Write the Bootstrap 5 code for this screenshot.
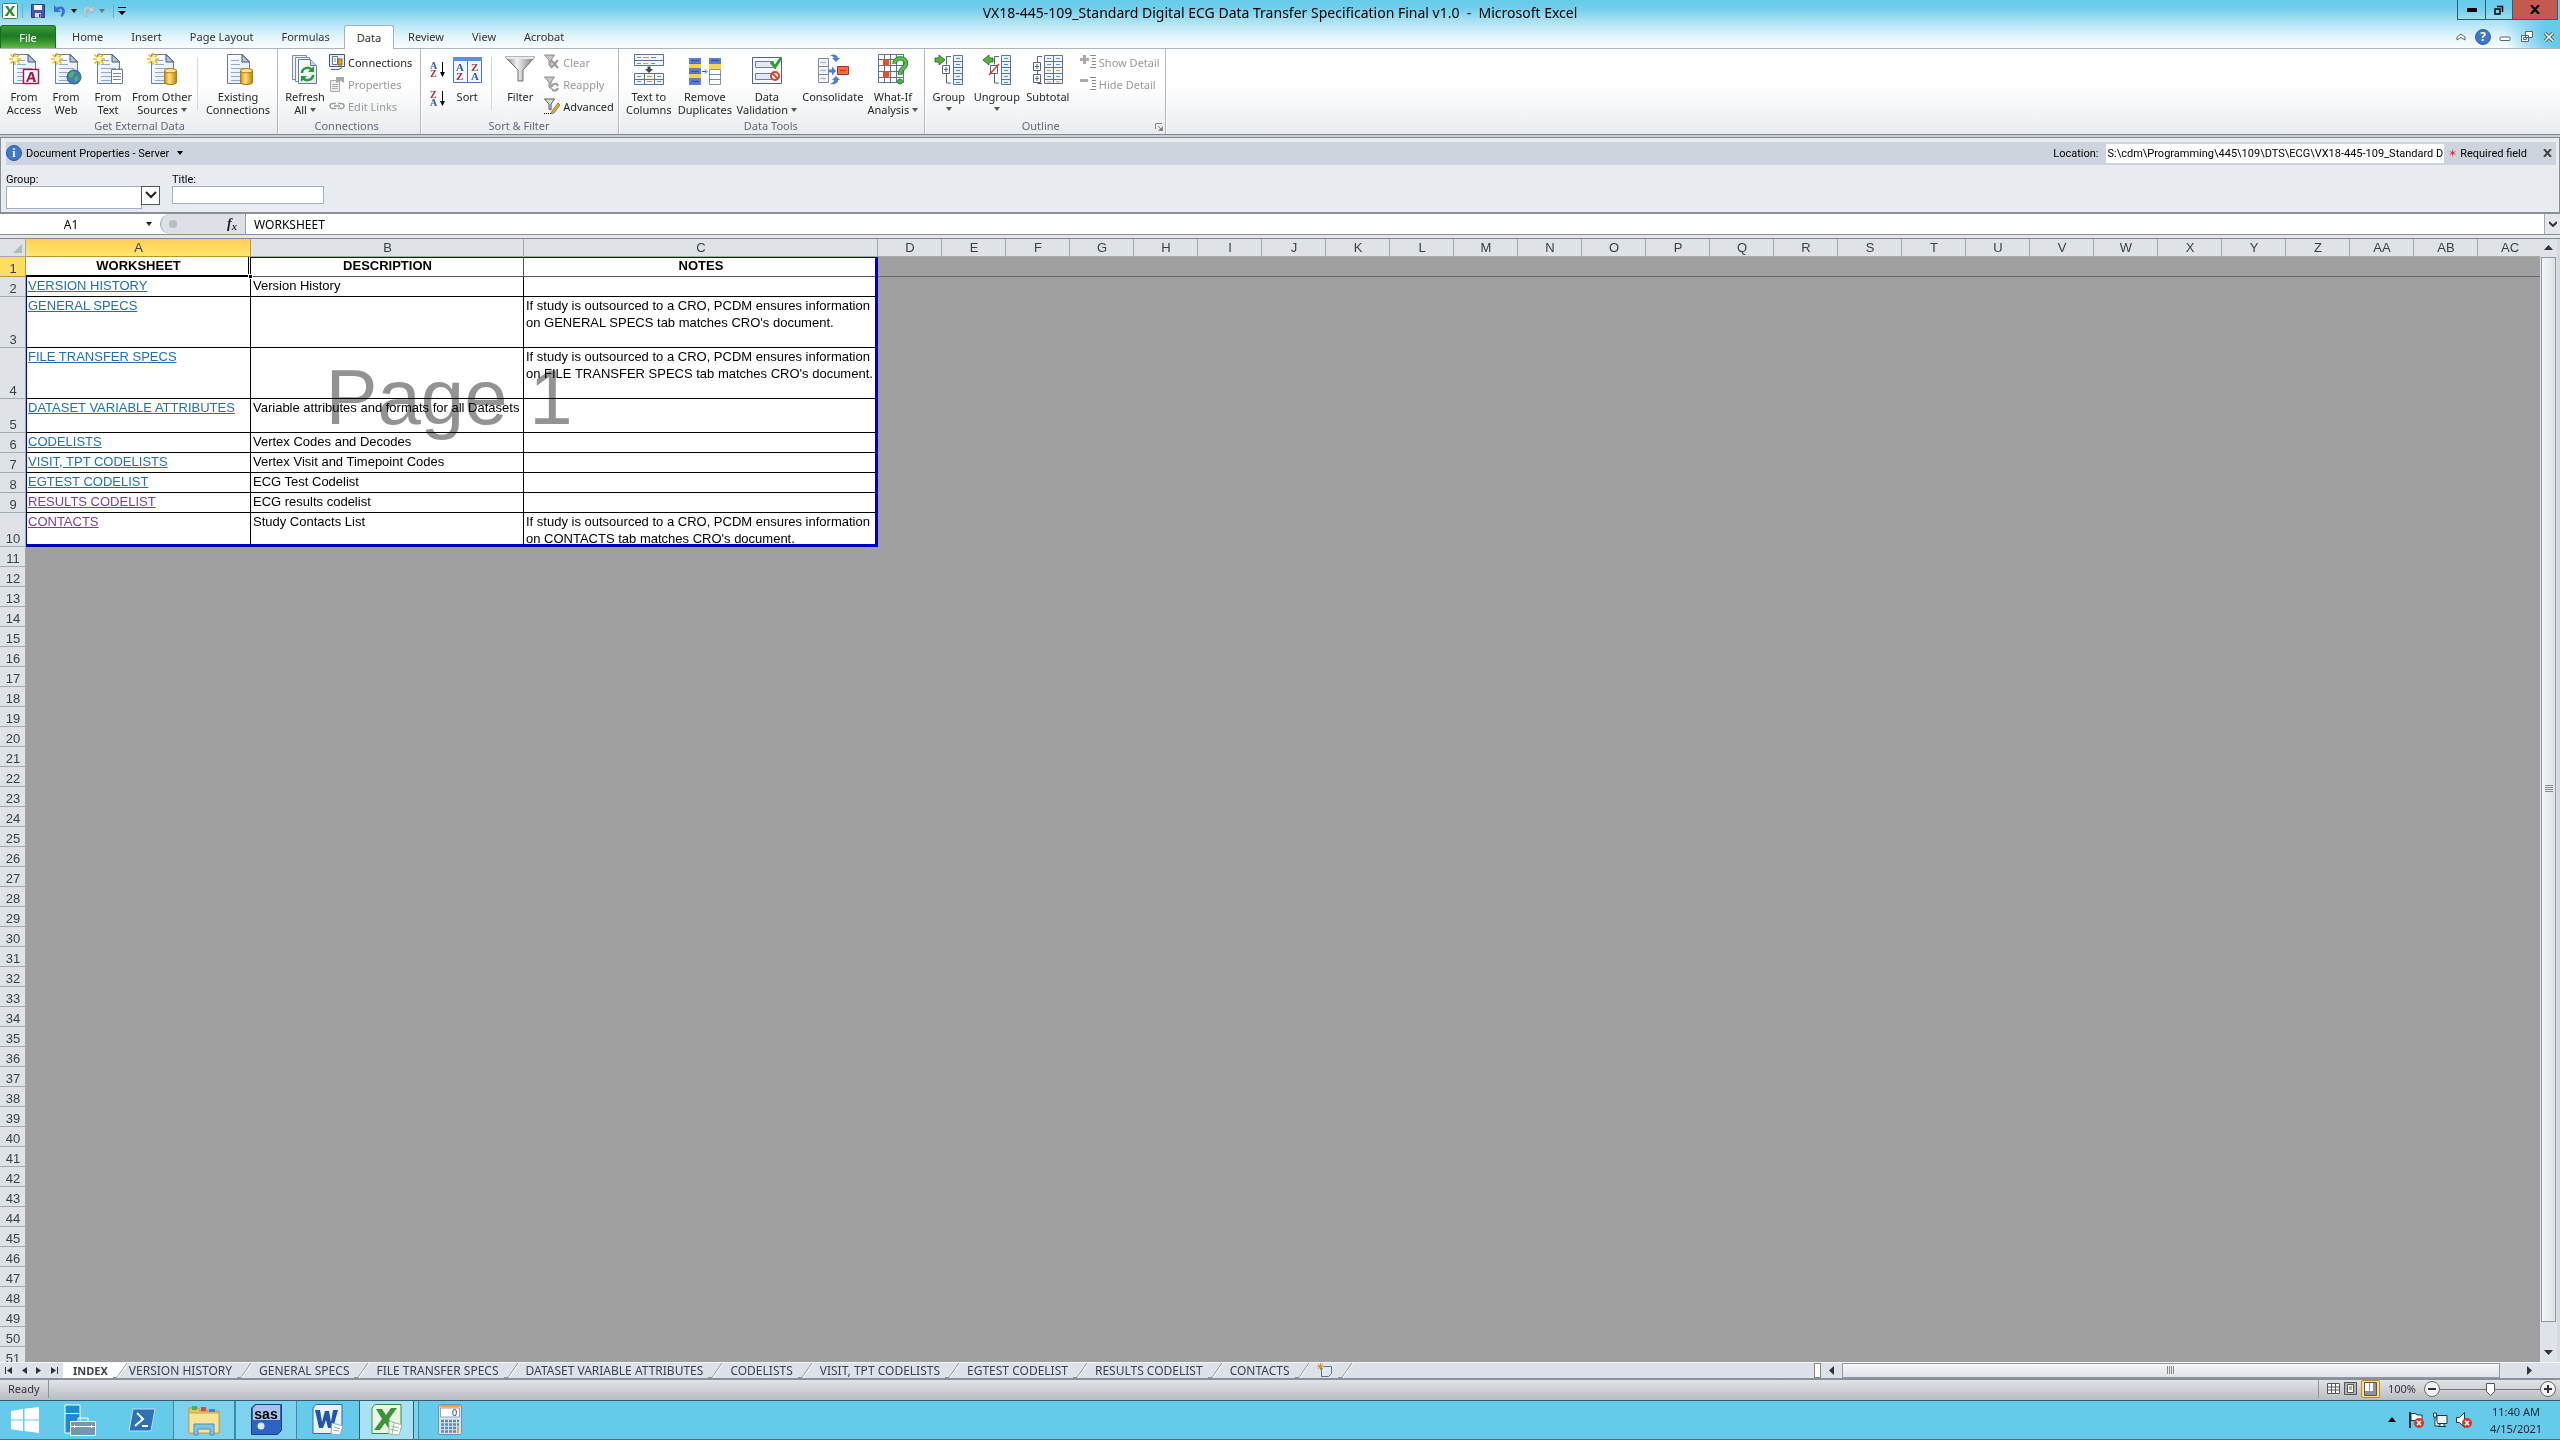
<!DOCTYPE html>
<html lang="en">
<head>
<meta charset="utf-8">
<meta name="viewport" content="width=device-width, initial-scale=1">
<title>VX18-445-109_Standard Digital ECG Data Transfer Specification Final v1.0 - Microsoft Excel</title>
<link rel="stylesheet" href="https://cdn.jsdelivr.net/npm/bootstrap@5.3.0/dist/css/bootstrap.min.css">
<style>
:root{--ui:"Noto Sans","Open Sans",sans-serif;--cell:"Liberation Sans",Arial,sans-serif;}
html,body{height:100%;}
body{font-family:var(--ui);font-size:11px;line-height:13px;color:#1e1e1e;background:#a0a0a0;overflow:hidden;}
button{font:inherit;color:inherit;background:none;border:0;padding:0;}
input,select{font:inherit;color:#000;}
svg{display:block;flex:none;}
.tri{width:0;height:0;border:3px solid transparent;border-top:4px solid currentColor;border-bottom:0;display:inline-block;}
.vsep{width:1px;background:#7fa9bb;}

/* title bar and tabs */
.topzone{background:radial-gradient(ellipse 56px 60px at 100% 60%,#66cbeb 30%,rgba(102,203,235,0) 100%),linear-gradient(#66cbeb 0,#6fceec 16%,#b5e5f5 50%,#e2f5fb 76%,#fafdfe 100%);border-bottom:1px solid #a9b4bc;}
.titlebar{height:25px;}
.wintitle{font-size:14px;line-height:25px;color:#000;}
.qat{flex:1 1 0;padding:2px 0 0 2px;height:20px;}
.winctl{flex:1 1 0;padding-right:2px;}
.winbtn{height:20px;border:1px solid #2d5f71;border-top:0;margin-left:-1px;display:flex;align-items:center;justify-content:center;}
.w-min{width:29px}.w-max{width:28px}.w-close{width:46px;background:#c6594f;}
.tabrow{height:23px;}
.tabrow .rtab{padding:0 14px;line-height:23px;color:#333;}
.filetab{width:56px;margin-right:2px;background:linear-gradient(#3c9a3c,#1f7a22 45%,#2f8f2a 65%,#62b846);color:#fff!important;border:1px solid #1b6b23;border-bottom:0;border-radius:3px 3px 0 0;line-height:23px;}
.rtab.on{background:#fff;border:1px solid #9fb4be;border-bottom:0;border-radius:3px 3px 0 0;padding:0 12px!important;margin-bottom:-1px;z-index:1;line-height:22px;}
.wbctl button{width:22px;display:flex;justify-content:center;}

/* ribbon */
.ribbon{height:86px;background:linear-gradient(#fff 0,#fefefe 45%,#e9ecef 100%);border-bottom:1px solid #85898f;color:#262626;}
.rgroup{border-right:1px solid #b3b8be;box-shadow:1px 0 0 #fff;padding:2px 1px 0 3px;}
.rgroup .glabel{color:#63687c;text-align:center;line-height:15px;height:17px;}
.big{display:flex;flex-direction:column;align-items:center;height:67px;padding-top:2px;text-align:center;white-space:nowrap;}
.big .cap{padding-top:5px;line-height:13px;}
.big .tri{margin:0 0 2px 3px;color:#555;}
.mini{display:flex;align-items:center;gap:3px;height:22px;white-space:nowrap;}
.off{color:#999;}
.w42{width:42px}.w58{width:58px}.w66{width:66px}.w76{width:76px}.w48{width:48px}.w54{width:54px}
.sortpair{width:27px;gap:12px;padding-top:10px;}
.rsep{width:1px;margin:6px 2px 8px;background:#d5d9dd;}

/* document properties */
.strip{height:3px;background:#c9ced5;border-bottom:1px solid #85898f;}
.docprops{height:76px;background:#e8ecf1;border-left:1px solid #8b9097;border-right:1px solid #8b9097;border-bottom:2px solid #8b8f96;padding:4px 3px 0 5px;color:#000;font-family:Roboto,var(--ui);font-size:11px;}
.dphead{height:23px;background:#cdd4dd;}
.locbox{width:338px;height:19px;border:0;padding:0 1px;background:#fff;}
.combo{width:154px;height:23px;}
.combo select{appearance:none;width:136px;height:23px;border:1px solid #9fb0c4;background:#fff;border-radius:0;padding:0;}
.combo .drop{width:19px;height:19px;border:1px solid #555;background:#fff;display:flex;align-items:center;justify-content:center;margin-left:-1px;}
.titlein{width:152px;height:18px;border:1px solid #9fb0c4;background:#fff;padding:0 2px;}

/* formula bar */
.fbar{height:21px;background:#fff;border-bottom:1px solid #8b8f96;font-size:12px;}
.namebox{width:160px;}
.namebox input{width:142px;border:0;text-align:center;height:20px;background:none;padding:2px 0 0;}
.fxzone{width:86px;background:#dde1e7;border-right:1px solid #9aa0a8;border-left:1px solid #9aa0a8;border-radius:10px 0 0 10px;}
.fxbtn{font:italic 700 14px "Liberation Serif",serif;}
.fin{border:0;padding:2px 8px 0;height:20px;background:none;}
.fdrop{width:16px;background:#e4e8ed;border-left:1px solid #a5abb3;}
.fgap{height:4px;background:#e4e7ec;border-bottom:1px solid #85898f;}

/* worksheet */
.sheetarea{min-height:0;background:#a0a0a0;}
.gridwrap{min-width:0;overflow:hidden;position:relative;}
.xl{table-layout:fixed;border-collapse:separate;border-spacing:0;width:2542px;font:13px/17px var(--cell);color:#000;}
.xl th,.xl td{padding:0;font-weight:400;vertical-align:top;}
.xl thead th{height:18px;background:#dfe3e8;text-align:center;line-height:18px;color:#3a3f46;box-shadow:inset -1px -1px 0 #a4a9b0;}
.xl thead th.hot{background:linear-gradient(#ffcf58,#ffe86e);box-shadow:inset -1px -1px 0 #c2942d;}
.xl tbody th{background:#dfe3e8;text-align:center;vertical-align:bottom;color:#3a3f46;box-shadow:inset -1px -1px 0 #a4a9b0;}
.xl tbody th.hot{background:#ffdc62;box-shadow:inset -1px -1px 0 #c2942d;}
.xl .cellx{background:#fff;box-shadow:inset -1px -1px 0 #000;padding-left:2px;white-space:nowrap;}
.xl .colA{box-shadow:inset 1px 0 0 #0000c0,inset -1px -1px 0 #000;}
.xl .colC{box-shadow:inset -3px 0 0 #0000b8,inset 0 -1px 0 #000;}
.xl .hd .cellx{font-weight:700;text-align:center;padding-left:0;box-shadow:inset 0 1px 0 #0000a0,inset -1px -1px 0 #555;}
.xl .hd .colC{box-shadow:inset -3px 0 0 #0000b8,inset 0 1px 0 #0000a0,inset 0 -1px 0 #555;}
.xl .hd .colA{box-shadow:inset -1px -2px 0 #000,inset -2px 0 0 #fff,inset -3px 0 0 #000;position:relative;}
.xl .last .cellx{box-shadow:inset 0 -3px 0 #0000b8,inset -1px 0 0 #000;}
.xl .last .colA{box-shadow:inset 0 -3px 0 #0000b8,inset -1px 0 0 #000,inset 1px 0 0 #0000c0;}
.xl .last .colC{box-shadow:inset -3px -3px 0 #0000b8;}
.xl .frz{box-shadow:inset 0 -1px 0 #6a6a6a;}
.xl a{color:#1f6fb5;}
.xl a.seen{color:#7a3c96;}
.handle{position:absolute;right:-2px;bottom:-2px;width:5px;height:5px;background:#000;border:1px solid #fff;z-index:2;}
.h20{height:20px}.h34{height:34px}.h51{height:51px}
.watermark{position:absolute;left:26px;top:18px;width:846px;height:280px;font:78px/90px var(--cell);color:#939393;mix-blend-mode:multiply;pointer-events:none;}
.vscroll{width:20px;background:#dfe3e9;border-right:3px solid #d5dae0;}
.vscroll .arrow{height:18px;display:flex;align-items:center;justify-content:center;}
.vthumb{flex:1;border:1px solid #9399a2;background:linear-gradient(90deg,#f4f6f8,#dde1e7);margin:0 1px;}
.vrest{height:22px;}

/* sheet tabs */
.tabsbar{height:16px;background:#dde1e9;border-top:1px solid #f4f5f7;font-size:12px;line-height:15px;color:#3d434b;}
.navs{width:58px;padding-left:5px;}
.stab{padding:0 1px;white-space:nowrap;}
.stab.cur{background:#fff;font-weight:700;padding:0 1px 0 10px;font-size:11px;margin-left:5px;}
.hscroll{width:726px;}
.hsplit{width:7px;border:1px solid #888;background:#fff;}
.hthumb{width:658px;border:1px solid #9399a2;background:linear-gradient(#f6f7f9,#dfe2e8);}
.statusbar{height:22px;background:linear-gradient(#e0e3e7,#b9bdc3);border-top:2px solid #8b8f96;color:#333;padding-bottom:2px;}
.statusbar .vsep{background:#8f949b;}
.viewon{background:#fbe08a;border:1px solid #c28a1e;border-radius:2px;padding:1px 2px;}

/* taskbar */
.taskbar{height:40px;background:#66caeb;border-top:1px solid #2c5f70;border-bottom:1px solid #3d7488;color:#0d2a35;}
.tk{height:38px;display:flex;align-items:center;justify-content:center;width:62px;}
.tk.first{width:49px;}
.tk.run{background:#7dd3ef;border-left:1px solid #3f8aa2;border-right:1px solid #3f8aa2;}
.tk.act{background:#a9e2f5;border-left:1px solid #2c5f70;border-right:1px solid #2c5f70;width:55px;}
.tk.stackedge{width:5px;border-left:0;}
.clock{line-height:17px;text-align:center;width:72px;}
</style>
</head>
<body class="d-flex flex-column">

<svg width="0" height="0" class="position-absolute" aria-hidden="true">
<defs>
<linearGradient id="gy" x1="0" x2="1"><stop offset="0" stop-color="#d79414"/><stop offset=".4" stop-color="#ffe27a"/><stop offset="1" stop-color="#c98408"/></linearGradient>
<linearGradient id="gd" x1="0" y1="0" x2="1" y2="1"><stop offset="0" stop-color="#fff"/><stop offset="1" stop-color="#dde8f6"/></linearGradient>
<linearGradient id="gg" x1="0" x2="1"><stop offset="0" stop-color="#777"/><stop offset=".4" stop-color="#f2f2f2"/><stop offset="1" stop-color="#777"/></linearGradient>
<symbol id="page" viewBox="0 0 32 32"><path d="M5.500 1.500h15l7 7v22h-22z" fill="url(#gd)" stroke="#6b7c94"/><path d="M20 1.500v7.500h7.500z" fill="#b4c6e2" stroke="#4a5c78"/><path d="M9 7.500h8M9 11.500h9M9 15.500h15M9 19.500h15M9 23.500h15M9 27.500h15" stroke="#8fa9d4"/></symbol>
<symbol id="burst" viewBox="0 0 12 12"><path d="M6 0v12M0 6h12M1.500 1.500l9 9M10.500 1.500l-9 9" stroke="#e8b820" stroke-width="1.500"/><circle cx="6" cy="6" r="2.500" fill="#fff9b8"/></symbol>
<symbol id="drum" viewBox="0 0 12 16"><path d="M.5 2.500v11c0 2.600 11 2.600 11 0v-11" fill="url(#gy)" stroke="#a8730a"/><ellipse cx="6" cy="2.500" rx="5.500" ry="2" fill="#ffe9a0" stroke="#b57d0d"/></symbol>
<symbol id="redx" viewBox="0 0 10 10"><circle cx="5" cy="5" r="5" fill="#d8352a"/><path d="M3 2.800l4 4.400M7 2.800l-4 4.400" stroke="#fff" stroke-width="1.500"/></symbol>
<symbol id="funnel" viewBox="0 0 16 16"><path d="M.5 1h10L7 6v7l-2-2V6z" fill="#c9c9c9" stroke="#888"/></symbol>
<symbol id="colblk" viewBox="0 0 10 30"><path d="M.5 .5h9v29h-9z" fill="#eaf1fb" stroke="#5d7297"/><path d="M0 6.500h10M0 12.500h10M0 18.500h10M0 24.500h10" stroke="#5d7297"/><path d="M3 3.500h4M3 9.500h4M3 15.500h4M3 21.500h4M3 27.500h4" stroke="#4a8bd8"/></symbol>
</defs>
</svg>

<header class="topzone">
  <div class="titlebar d-flex justify-content-between">
    <div class="qat d-flex align-items-center">
      <svg width="16" height="16" viewBox="0 0 16 16"><rect x=".5" y=".5" width="15" height="15" rx="1" fill="#fff" stroke="#3c8a45"/><path d="M3 3h3l2 3.500L10.500 3H13L9.500 8l3.500 5h-3L7.800 9.500 5.500 13H2.600L6.300 8z" fill="#2b8a33"/></svg>
      <svg class="ms-1 me-2" width="1" height="14"><path d="M.5 0v14" stroke="#7fa9bb"/></svg>
      <button aria-label="Save"><svg width="14" height="14" viewBox="0 0 14 14"><path d="M.5 .5h13v13h-13z" fill="#4a55b8" stroke="#303a8c"/><path d="M3 1h8v5H3z" fill="#f1f4fc"/><path d="M4 9h6v4.500H4z" fill="#dfe3ee"/><path d="M8 10h1.500v3H8z" fill="#303a8c"/></svg></button>
      <button class="ms-2" aria-label="Undo"><svg width="14" height="14" viewBox="0 0 14 14"><path d="M1 1v7h7L5.500 5.500C8.500 3.500 11 6.500 7.500 12l1.500 1C15 7 11 0 3.500 3.500z" fill="#3b6fd0"/></svg></button>
      <i class="tri ms-1 text-black"></i>
      <button class="ms-1" aria-label="Redo"><svg width="14" height="14" viewBox="0 0 14 14"><path d="M13 1v7H6l2.500-2.500C5.500 3.500 3 6.500 6.500 12L5 13C-1 7 3 0 10.500 3.500z" fill="#c3cdd2" stroke="#98aab3" stroke-width=".6"/></svg></button>
      <i class="tri ms-1 text-secondary"></i>
      <svg class="ms-2 me-1" width="1" height="14"><path d="M.5 0v14" stroke="#7fa9bb"/></svg>
      <button aria-label="Customize toolbar"><svg width="8" height="8" viewBox="0 0 8 8"><path d="M0 .5h8" stroke="#000"/><path d="M0 4h8L4 8z"/></svg></button>
    </div>
    <div class="wintitle">VX18-445-109_Standard Digital ECG Data Transfer Specification Final v1.0&nbsp; -&nbsp; Microsoft Excel</div>
    <div class="winctl d-flex justify-content-end">
      <button class="winbtn w-min" aria-label="Minimize"><svg width="10" height="4"><path d="M0 0h10v4H0z"/></svg></button>
      <button class="winbtn w-max" aria-label="Restore"><svg width="10" height="10" viewBox="0 0 10 10"><path d="M1 4h5v5H1zM3 1.500h5.500V7" fill="none" stroke="#000" stroke-width="1.500"/></svg></button>
      <button class="winbtn w-close" aria-label="Close"><svg width="10" height="9" viewBox="0 0 10 9"><path d="M1 0l8 9M9 0L1 9" stroke="#000" stroke-width="2.200"/></svg></button>
    </div>
  </div>
  <nav class="tabrow d-flex" aria-label="Ribbon tabs">
    <button class="filetab">File</button>
    <button class="rtab">Home</button><button class="rtab">Insert</button><button class="rtab">Page Layout</button><button class="rtab">Formulas</button><button class="rtab on">Data</button><button class="rtab">Review</button><button class="rtab">View</button><button class="rtab">Acrobat</button>
    <div class="wbctl ms-auto d-flex align-items-center">
      <button aria-label="Collapse ribbon"><svg width="10" height="8" viewBox="0 0 10 8"><path d="M1 4l4-3 4 3v3L5 4.500 1 7z" fill="#fff" stroke="#4f6573"/></svg></button>
      <button aria-label="Help"><svg width="16" height="16"><circle cx="8" cy="8" r="7.500" fill="#3f77d0" stroke="#2b5cab"/><text x="8" y="12" font-size="12" font-weight="700" text-anchor="middle" fill="#fff">?</text></svg></button>
      <button aria-label="Minimize workbook"><svg width="12" height="10" viewBox="0 0 12 10"><rect x="1" y="5" width="10" height="3.500" rx="1" fill="#fff" stroke="#4f6573"/></svg></button>
      <button aria-label="Restore workbook"><svg width="12" height="11" viewBox="0 0 12 11"><path d="M4.500 .5h7v6h-7zM.5 4.500h7v6h-7z" fill="#fff" stroke="#4f6573"/><path d="M2.500 6.500h3v2h-3z" fill="none" stroke="#4f6573"/></svg></button>
      <button aria-label="Close workbook"><svg width="12" height="10" viewBox="0 0 12 10"><path d="M2 1l8 8M10 1L2 9" stroke="#4f6573" stroke-width="3.500"/><path d="M2 1l8 8M10 1L2 9" stroke="#fff" stroke-width="1.500"/></svg></button>
    </div>
  </nav>
</header>

<section class="ribbon d-flex">
  <div class="rgroup"><div class="d-flex">
    <button class="big w42"><svg width="32" height="32"><use href="#page"/><use href="#burst" x="1" width="12" height="12"/><rect x="15.500" y="16.500" width="15" height="14" fill="#fff" stroke="#a81c4a" stroke-width="1.500"/><path d="M18 29l4-10h3l3 10h-2.500l-.7-2.500h-3.600L20 29zM22 24.500h2.500L23.300 21z" fill="#a81c4a" fill-rule="evenodd"/></svg><span class="cap">From<br>Access</span></button>
    <button class="big w42"><svg width="32" height="32"><use href="#page"/><use href="#burst" x="1" width="12" height="12"/><circle cx="24" cy="24" r="7" fill="#3f7fc0" stroke="#2c5f94"/><path d="M20 20c3-3 6-1 4 1s-1 4-3 4-3-3-1-5zM26 23c3 0 3 4 0 6-2-2-2-4 0-6z" fill="#5cb04c"/></svg><span class="cap">From<br>Web</span></button>
    <button class="big w42"><svg width="32" height="32"><use href="#page"/><use href="#burst" x="1" width="12" height="12"/><path d="M19.500 16.500h11v14h-11z" fill="#fff" stroke="#6b7c94"/><path d="M21 20.500h8M21 23.500h8M21 26.500h8M20.500 17v-2M23.500 17v-2M26.500 17v-2M29.500 17v-2" stroke="#7a8698"/></svg><span class="cap">From<br>Text</span></button>
    <button class="big w66"><svg width="32" height="32"><use href="#page"/><use href="#burst" x="1" width="12" height="12"/><use href="#drum" x="18" y="15" width="13" height="17"/></svg><span class="cap">From Other<br>Sources<i class="tri"></i></span></button>
    <span class="rsep"></span>
    <button class="big w76"><svg width="32" height="32"><use href="#page"/><use href="#drum" x="18" y="15" width="13" height="17"/></svg><span class="cap">Existing<br>Connections</span></button>
  </div><div class="glabel">Get External Data</div></div>

  <div class="rgroup pe-2"><div class="d-flex">
    <button class="big w48"><svg width="32" height="32" viewBox="0 0 32 32"><path d="M3.500 2.500h14v24h-14z" fill="#eef3fb" stroke="#7a8ca6"/><path d="M6.500 4.500h14v24h-14z" fill="#eef3fb" stroke="#7a8ca6"/><path d="M9.500 6.500h12l6 6v18h-18z" fill="url(#gd)" stroke="#6b7c94"/><path d="M21.500 6.500v6h6" fill="#c4d4ea" stroke="#6b7c94"/><path d="M13 20c0-5 7-7 10-3M24 22c0 5-7 7-10 3" fill="none" stroke="#2b9a35" stroke-width="2.500"/><path d="M25 13v6h-6zM12 29v-6h6z" fill="#2b9a35"/></svg><span class="cap">Refresh<br>All<i class="tri"></i></span></button>
    <div>
      <button class="mini"><svg width="16" height="16" viewBox="0 0 16 16"><path d="M.5 .5h15v12H.5z" fill="#e7eef8" stroke="#3f5a82"/><path d="M3.500 2.500h5v8h-5z" fill="#fff" stroke="#5d7297"/><path d="M5 5h2M5 7h2" stroke="#5d8bd8"/><path d="M9 5h4v6H9z" fill="#e2a428" stroke="#94660b"/><path d="M2 15.500h8l3-2" fill="none" stroke="#2d62b5"/></svg>Connections</button>
      <button class="mini off" disabled><svg width="16" height="16" viewBox="0 0 16 16"><path d="M1.500 4.500h9v11h-9z" fill="#eee" stroke="#aaa"/><path d="M7 1h8v6l-3-2-5 2z" fill="#aaa"/><path d="M3 8.500h6M3 10.500h6M3 12.500h6" stroke="#aaa"/></svg>Properties</button>
      <button class="mini off" disabled><svg width="16" height="16" viewBox="0 0 16 16"><path d="M7 5.500H3.500a2.500 2.500 0 0 0 0 5H7M9 5.500h3.500a2.500 2.500 0 0 1 0 5H9M5 8h6" fill="none" stroke="#a0a0a0" stroke-width="1.500"/></svg>Edit Links</button>
    </div>
  </div><div class="glabel">Connections</div></div>

  <div class="rgroup pe-1"><div class="d-flex">
    <div class="sortpair d-flex flex-column align-items-center">
      <button aria-label="Sort A to Z"><svg width="16" height="17" viewBox="0 0 16 17"><g font-size="10" font-weight="700" font-family="Liberation Serif"><text x="0" y="8" fill="#2d5aa8">A</text><text x="0" y="16" fill="#a8323a">Z</text></g><path d="M12.500 1v12" stroke="#000"/><path d="M10 11h5l-2.500 5z"/></svg></button>
      <button aria-label="Sort Z to A"><svg width="16" height="17" viewBox="0 0 16 17"><g font-size="10" font-weight="700" font-family="Liberation Serif"><text x="0" y="8" fill="#a8323a">Z</text><text x="0" y="16" fill="#2d5aa8">A</text></g><path d="M12.500 1v12" stroke="#000"/><path d="M10 11h5l-2.500 5z"/></svg></button>
    </div>
    <button class="big w-auto px-0"><svg width="32" height="32" viewBox="0 0 32 32"><path d="M2.500 4.500h28v25h-28z" fill="#f3f7fd" stroke="#4c74b8"/><path d="M2 4h29v4H2z" fill="#5a90e0"/><path d="M16.500 8v22" stroke="#4c74b8"/><g font-size="11" font-weight="700" font-family="Liberation Serif"><text x="5" y="18" fill="#2d5aa8">A</text><text x="5" y="27" fill="#a8323a">Z</text><text x="20" y="18" fill="#a8323a">Z</text><text x="20" y="27" fill="#2d5aa8">A</text></g></svg><span class="cap">Sort</span></button>
    <span class="rsep ms-2 me-1"></span>
    <button class="big w48"><svg width="32" height="32" viewBox="0 0 32 32"><path d="M1 4h30L19 17v11h-5V17z" fill="url(#gg)" stroke="#6d6d6d"/><path d="M1 4h30l-2 2H3z" fill="#e9e9e9"/></svg><span class="cap">Filter</span></button>
    <div>
      <button class="mini off" disabled><svg width="16" height="16"><use href="#funnel" width="16" height="16"/><path d="M7 6l7 8M14 6l-7 8" stroke="#999" stroke-width="2"/></svg>Clear</button>
      <button class="mini off" disabled><svg width="16" height="16"><use href="#funnel" width="16" height="16"/><path d="M8 11c0-4 5-4 6-1M14 12c-2 4-5 3-6 1" fill="none" stroke="#999" stroke-width="2"/></svg>Reapply</button>
      <button class="mini"><svg width="16" height="16" viewBox="0 0 16 16"><path d="M.5 1h10L7 6v6l-2-1V6z" fill="#ddd" stroke="#555"/><path d="M14 5l2 2-6 8-3 1 1-3z" fill="#e8a83c" stroke="#7a5210" stroke-width=".6"/><path d="M0 15.500h7" stroke="#000" stroke-dasharray="1 1"/></svg>Advanced</button>
    </div>
  </div><div class="glabel">Sort &amp; Filter</div></div>

  <div class="rgroup pe-1"><div class="d-flex">
    <button class="big w54"><svg width="32" height="32" viewBox="0 0 32 32"><path d="M1.500 1.500h29v11h-29zM1.500 20.500h29v11h-29z" fill="#f4f8fd" stroke="#5d7297"/><path d="M2 7.500h28M2 26.500h28M11.500 20v12M21.500 20v12" stroke="#5d7297"/><path d="M4 4.500h4M18 4.500h5M4 10.500h4M18 10.500h4M4 23.500h4M24 23.500h4M4 28.500h4M24 28.500h4" stroke="#5a90e0"/><path d="M10 4.500h6M10 10.500h5M14 23.500h5M14 28.500h5" stroke="#e8962c"/><path d="M14.500 13.500h3v2.500h2.500l-4 4-4-4h2.500z" fill="#444"/></svg><span class="cap">Text to<br>Columns</span></button>
    <button class="big w58"><svg width="32" height="32" viewBox="0 0 32 32"><path d="M0 5h12v27H0zM20 5h12v6H20z" fill="#5a80dc"/><path d="M0 11h12v5H0zM0 21h12v5H0zM20 11h12v5H20z" fill="#f6d257"/><path d="M20.500 16.500h11v15h-11z" fill="#fff" stroke="#8796b0"/><path d="M20 21.500h12M20 26.500h12M0 10.500h12M0 15.500h12M0 20.500h12M0 25.500h12" stroke="#5b6c90" stroke-width=".8"/><path d="M2 8l2-1 2 1 2-1 2 1M2 19l2-1 2 1 2-1 2 1M2 29l2-1 2 1 2-1 2 1M22 8l2-1 2 1 2-1 2 1" fill="none" stroke="#28458f"/><path d="M13 18.500h4M16 16.500l2 2-2 2" fill="none" stroke="#2d5ab8"/></svg><span class="cap">Remove<br>Duplicates</span></button>
    <button class="big w66"><svg width="32" height="32" viewBox="0 0 32 32"><path d="M1.500 4.500h29v26h-29z" fill="#f4f8fd" stroke="#4e6488"/><path d="M4.500 8.500h18v6h-18zM4.500 20.500h18v6h-18z" fill="#e2e8f2" stroke="#6d7f9c"/><path d="M20 9l4 5 6-9" fill="none" stroke="#2fa02f" stroke-width="3"/><circle cx="24" cy="23" r="4" fill="#fff" stroke="#d8442a" stroke-width="2"/><path d="M21 20l6 6" stroke="#d8442a" stroke-width="2"/></svg><span class="cap">Data<br>Validation<i class="tri"></i></span></button>
    <button class="big w66"><svg width="32" height="32" viewBox="0 0 32 32"><path d="M1.500 5.500h10v24h-10z" fill="#f3f6fb" stroke="#7a8aa6"/><path d="M1 13.500h10M1 21.500h10" stroke="#7a8aa6"/><path d="M3 10l2-1 2 1 2-1M3 18l2-1 2 1 2-1M3 26l2-1 2 1 2-1" fill="none" stroke="#8fa1c0"/><path d="M20.500 13.500h11v8h-11z" fill="#ff6a48" stroke="#b02c14"/><path d="M23 18l2-1 2 1 2-1" fill="none" stroke="#a82810"/><path d="M12 16.500h3v-3l4 4.500-4 4.500v-3h-3z" fill="#4a7fe0"/><path d="M13 3c4-3 7-1 8 2h2l-4 4-4-4h2c-1-2-2-2-4-2zM13 31c5 1 8-1 8-4h2l-4-4-4 4h2c0 2-2 3-4 4z" fill="#4a7fe0"/></svg><span class="cap">Consolidate</span></button>
    <button class="big w54"><svg width="32" height="32" viewBox="0 0 32 32"><path d="M1.500 1.500h25v28h-25z" fill="#fff" stroke="#5d7297"/><path d="M7.500 1v29M13.500 1v29M19.500 1v29M1 6.500h26M1 12.500h26M1 18.500h26M1 24.500h26" stroke="#5d7297"/><path d="M6 7h6v6H6zM6 19h6v6H6z" fill="#ee4b2e"/><path d="M17.500 11c0-8 12.500-7 11.500 0-1 5-6 4-6 11" fill="none" stroke="#268a2a" stroke-width="4.500"/><path d="M17.500 11c0-8 12.500-7 11.500 0-1 5-6 4-6 11" fill="none" stroke="#62c052" stroke-width="2.500"/><circle cx="23" cy="28.500" r="2.500" fill="#4fb045" stroke="#268a2a"/></svg><span class="cap">What-If<br>Analysis<i class="tri"></i></span></button>
  </div><div class="glabel">Data Tools</div></div>

  <div class="rgroup"><div class="d-flex">
    <button class="big w42"><svg width="32" height="32" viewBox="0 0 32 32"><path d="M2 5h4V2l6 5-6 5V9H2z" fill="#57b33e" stroke="#2d7a1f"/><path d="M18 3.500h-4.500v8M13.500 21v9H18M9.500 12.500h7v8h-7zM13 14v5M11 16.500h4" fill="none" stroke="#4e6488"/><use href="#colblk" x="20" y="2" width="10" height="30"/></svg><span class="cap d-flex flex-column align-items-center">Group<i class="tri m-0 mt-1"></i></span></button>
    <button class="big w54"><svg width="32" height="32" viewBox="0 0 32 32"><path d="M12 5H8V2L2 7l6 5V9h4z" fill="#57b33e" stroke="#2d7a1f"/><path d="M18 3.500h-4.500v8M13.500 21v9H18M9.500 12.500h7v8h-7z" fill="none" stroke="#4e6488"/><path d="M8 22L18 11" stroke="#e0362a" stroke-width="1.500"/><use href="#colblk" x="20" y="2" width="10" height="30"/></svg><span class="cap d-flex flex-column align-items-center">Ungroup<i class="tri m-0 mt-1"></i></span></button>
    <button class="big w48"><svg width="32" height="32" viewBox="0 0 32 32"><path d="M10 3.500H5.500v27H10" fill="none" stroke="#4e6488"/><path d="M1.500 9.500h7v8h-7zM1.500 21.500h7v8h-7z" fill="#fff" stroke="#4e6488"/><path d="M5 11v5M3 13.500h4M5 23v5M3 25.500h4" stroke="#4e6488"/><path d="M12.500 2.500h18v28h-18z" fill="#f4f8fd" stroke="#5d7297"/><path d="M12 8.500h18M12 14.500h18M12 20.500h18M12 26.500h18M21.500 2v29" stroke="#5d7297"/><path d="M15 5.500h4M24 5.500h4M15 11.500h4M24 11.500h4M15 23.500h4M24 23.500h4" stroke="#5a90e0"/><path d="M15 17.500h4M24 17.500h4M15 29h4M24 29h4" stroke="#e8962c"/></svg><span class="cap">Subtotal</span></button>
    <div class="ms-2 me-1">
      <button class="mini off" disabled><svg width="16" height="16" viewBox="0 0 16 16"><path d="M3 1h3v3h3v3H6v3H3V7H0V4h3z" fill="#aaa"/><path d="M10 1.500h6M12 4.500h4M12 7.500h4M12 10.500h4M10 13.500h6" stroke="#888"/></svg>Show Detail</button>
      <button class="mini off" disabled><svg width="16" height="16" viewBox="0 0 16 16"><path d="M0 3h8v3H0z" fill="#aaa"/><path d="M10 1.500h6M12 4.500h4M12 7.500h4M12 10.500h4M10 13.500h6" stroke="#888"/></svg>Hide Detail</button>
    </div>
  </div><div class="glabel d-flex justify-content-between"><span></span>Outline<svg width="10" height="10" viewBox="0 0 10 10" class="mt-1"><path d="M1.500 7V1.500H8M4 4l3 3" fill="none" stroke="#888"/><path d="M9 4v5H4z" fill="#888"/></svg></div></div>
</section>

<div class="strip"></div>

<section class="docprops">
  <div class="dphead d-flex align-items-center">
    <svg width="16" height="16"><circle cx="8" cy="8" r="7.500" fill="#3f77d0" stroke="#2b5cab"/><text x="8" y="12" font-size="12" font-weight="700" font-family="Liberation Serif" text-anchor="middle" fill="#fff">i</text></svg>
    <button class="ms-1 d-flex align-items-center">Document Properties - Server<i class="tri ms-2"></i></button>
    <label class="ms-auto me-2" for="loc">Location:</label>
    <input id="loc" class="locbox" value="S:\cdm\Programming\445\109\DTS\ECG\VX18-445-109_Standard Digital ECG Data Transfer Specification Final v1.0.xlsx">
    <span class="ms-1"><span class="text-danger">✶</span> Required field</span>
    <button class="ms-3 me-1" aria-label="Close panel"><svg width="9" height="8" viewBox="0 0 9 8"><path d="M1 0l7 8M8 0L1 8" stroke="#444" stroke-width="2"/></svg></button>
  </div>
  <div class="d-flex pt-2" style="gap:12px">
    <div><label class="d-block" for="grp">Group:</label>
      <div class="combo d-flex"><select id="grp"><option></option></select><button class="drop" aria-label="Open list"><svg width="12" height="8" viewBox="0 0 12 8"><path d="M1 1l5 5 5-5" fill="none" stroke="#222" stroke-width="2"/></svg></button></div></div>
    <div><label class="d-block" for="ttl">Title:</label><input id="ttl" class="titlein d-block"></div>
  </div>
</section>

<section class="fbar d-flex">
  <div class="namebox d-flex align-items-center"><input aria-label="Name box" value="A1"><i class="tri ms-1"></i></div>
  <div class="fxzone d-flex align-items-center justify-content-between px-2"><svg width="8" height="8"><circle cx="4" cy="4" r="4" fill="#b9bdc4"/></svg><button class="fxbtn" aria-label="Insert function">f<sub>x</sub></button></div>
  <input class="fin flex-fill" aria-label="Formula bar" value="WORKSHEET">
  <button class="fdrop d-flex align-items-center justify-content-center" aria-label="Expand formula bar"><svg width="8" height="6" viewBox="0 0 8 6"><path d="M0 1l4 4 4-4" fill="none" stroke="#333" stroke-width="2"/></svg></button>
</section>
<div class="fgap"></div>

<main class="sheetarea d-flex flex-fill">
  <div class="gridwrap flex-fill">
    <table class="xl">
      <colgroup id="cols"><col style="width:26px"><col style="width:225px"><col style="width:273px"><col style="width:354px"></colgroup>
      <thead><tr id="heads"><th aria-label="Select all"><svg width="26" height="17"><path d="M22 5v9H13z" fill="#b4bac2"/></svg></th><th class="hot">A</th><th>B</th><th>C</th></tr></thead>
      <tbody id="rows">
        <tr class="h20 hd"><th class="hot">1</th><td class="cellx colA">WORKSHEET<span class="handle"></span></td><td class="cellx">DESCRIPTION</td><td class="cellx colC">NOTES</td><td class="frz" colspan="26"></td></tr>
        <tr class="h20"><th>2</th><td class="cellx colA"><a href="#v">VERSION HISTORY</a></td><td class="cellx">Version History</td><td class="cellx colC"></td></tr>
        <tr class="h51"><th>3</th><td class="cellx colA"><a href="#g">GENERAL SPECS</a></td><td class="cellx"></td><td class="cellx colC">If study is outsourced to a CRO, PCDM ensures information<br>on GENERAL SPECS tab matches CRO's document.</td></tr>
        <tr class="h51"><th>4</th><td class="cellx colA"><a href="#f">FILE TRANSFER SPECS</a></td><td class="cellx"></td><td class="cellx colC">If study is outsourced to a CRO, PCDM ensures information<br>on FILE TRANSFER SPECS tab matches CRO's document.</td></tr>
        <tr class="h34"><th>5</th><td class="cellx colA"><a href="#d">DATASET VARIABLE ATTRIBUTES</a></td><td class="cellx">Variable attributes and formats for all Datasets</td><td class="cellx colC"></td></tr>
        <tr class="h20"><th>6</th><td class="cellx colA"><a href="#c">CODELISTS</a></td><td class="cellx">Vertex Codes and Decodes</td><td class="cellx colC"></td></tr>
        <tr class="h20"><th>7</th><td class="cellx colA"><a href="#t">VISIT, TPT CODELISTS</a></td><td class="cellx">Vertex Visit and Timepoint Codes</td><td class="cellx colC"></td></tr>
        <tr class="h20"><th>8</th><td class="cellx colA"><a href="#e">EGTEST CODELIST</a></td><td class="cellx">ECG Test Codelist</td><td class="cellx colC"></td></tr>
        <tr class="h20"><th>9</th><td class="cellx colA"><a class="seen" href="#r">RESULTS CODELIST</a></td><td class="cellx">ECG results codelist</td><td class="cellx colC"></td></tr>
        <tr class="h34 last"><th>10</th><td class="cellx colA"><a class="seen" href="#k">CONTACTS</a></td><td class="cellx">Study Contacts List</td><td class="cellx colC">If study is outsourced to a CRO, PCDM ensures information<br>on CONTACTS tab matches CRO's document.</td></tr>
      </tbody>
    </table>
    <div class="watermark d-flex align-items-center justify-content-center">Page 1</div>
  </div>
  <div class="vscroll d-flex flex-column">
    <button class="arrow" aria-label="Scroll up"><svg width="9" height="5"><path d="M0 5h9L4.500 0z" fill="#333"/></svg></button>
    <div class="vthumb d-flex align-items-center justify-content-center"><svg width="8" height="8"><path d="M0 .5h8M0 2.500h8M0 4.500h8M0 6.500h8" stroke="#888"/></svg></div>
    <div class="vrest"></div>
    <button class="arrow" aria-label="Scroll down"><svg width="9" height="5"><path d="M0 0h9L4.500 5z" fill="#333"/></svg></button>
  </div>
</main>

<div class="tabsbar d-flex">
  <div class="navs d-flex align-items-center justify-content-between">
    <button aria-label="First sheet"><svg width="7" height="7"><path d="M.5 0v7" stroke="#333"/><path d="M7 0v7L2 3.500z" fill="#333"/></svg></button><button aria-label="Previous sheet"><svg width="5" height="7"><path d="M5 0v7L0 3.500z" fill="#333"/></svg></button><button aria-label="Next sheet"><svg width="5" height="7"><path d="M0 0v7l5-3.500z" fill="#333"/></svg></button><button aria-label="Last sheet"><svg width="7" height="7"><path d="M6.500 0v7" stroke="#333"/><path d="M0 0v7l5-3.500z" fill="#333"/></svg></button>
  </div>
  <div id="stabs" class="d-flex"></div>
  <div class="hscroll d-flex ms-auto">
    <span class="hsplit"></span>
    <button class="d-flex align-items-center px-2" aria-label="Scroll left"><svg width="5" height="9"><path d="M5 0v9L0 4.500z" fill="#333"/></svg></button>
    <div class="hthumb d-flex align-items-center justify-content-center"><svg width="8" height="8"><path d="M.5 0v8M2.500 0v8M4.500 0v8M6.500 0v8" stroke="#888"/></svg></div>
    <button class="ms-auto d-flex align-items-center pe-2" aria-label="Scroll right"><svg width="5" height="9"><path d="M0 0v9l5-4.500z" fill="#333"/></svg></button>
  </div>
  <div class="ps-3 pe-1"></div>
</div>

<div class="statusbar d-flex align-items-center">
  <span class="ps-2">Ready</span><span class="vsep ms-2 align-self-stretch"></span>
  <span class="vsep ms-auto align-self-stretch"></span>
  <div class="d-flex align-items-center gap-1 ms-2">
    <button aria-label="Normal view"><svg width="13" height="11" viewBox="0 0 13 11"><path d="M.5 .5h12v10H.5zM.5 4h12M.5 7h12M4.500 0v11M8.500 0v11" fill="#fff" stroke="#555"/></svg></button>
    <button aria-label="Page layout view"><svg width="13" height="13" viewBox="0 0 13 13"><path d="M.5 .5h12v12H.5z" fill="#aeb2b8" stroke="#555"/><path d="M3.500 2.500h6v8h-6z" fill="#fff" stroke="#555"/><path d="M5 5h3M5 7h3" stroke="#555"/></svg></button>
    <button class="viewon" aria-label="Page break preview"><svg width="13" height="14" viewBox="0 0 13 14"><path d="M.5 .5h12v13H.5z" fill="#8f949b" stroke="#555"/><path d="M1 1h4v8H1zM6 1h3v8H6z" fill="#fff"/></svg></button>
  </div>
  <span class="mx-2">100%</span>
  <button aria-label="Zoom out"><svg width="16" height="16"><circle cx="8" cy="8" r="7.500" fill="#f3f3f4" stroke="#666"/><path d="M4 8h8" stroke="#333" stroke-width="2"/></svg></button>
  <svg width="100" height="16"><path d="M0 8.500h100" stroke="#777"/><path d="M46.500 2.500h8v8l-4 4-4-4z" fill="#fff" stroke="#555"/></svg>
  <button class="me-1" aria-label="Zoom in"><svg width="16" height="16"><circle cx="8" cy="8" r="7.500" fill="#f3f3f4" stroke="#666"/><path d="M4 8h8M8 4v8" stroke="#333" stroke-width="2"/></svg></button>
</div>

<footer class="taskbar d-flex">
  <button class="tk first" aria-label="Start"><svg width="28" height="26" viewBox="0 0 28 26"><path d="M0 4l12-2v10.500H0zM13.500 1.800L28 0v12.500H13.500zM0 13.500h12V24L0 22.200zM13.500 13.500H28V26l-14.500-2z" fill="#fff"/></svg></button>
  <button class="tk" aria-label="Server Manager"><svg width="32" height="32" viewBox="0 0 32 32"><path d="M1 1h15v28H1z" fill="#1e8ad6" stroke="#fff"/><path d="M1 9.500h15" stroke="#fff"/><path d="M6.500 17.500h25v14h-25z" fill="#7795ac" stroke="#fff"/><path d="M14 17v-3h10v3M7 22.500h24M10.500 21v3M27.500 21v3" fill="none" stroke="#fff"/></svg></button>
  <button class="tk" aria-label="PowerShell"><svg width="28" height="24" viewBox="0 0 28 24"><path d="M5 1h22l-4 22H1z" fill="#2c71b5" stroke="#bfe0f5"/><path d="M9 5l6 6-8 7M14 18h6" fill="none" stroke="#fff" stroke-width="2"/></svg></button>
  <button class="tk run" aria-label="File Explorer"><svg width="32" height="32" viewBox="0 0 32 32"><path d="M1 4h9l2 3h19v22H1z" fill="#e8c560" stroke="#b8923a"/><path d="M4 2h5v4H4z" fill="#4eae4a"/><path d="M13 3h5v4h-5z" fill="#d9483b"/><path d="M21 5h6v3h-6z" fill="#4a80d8"/><path d="M1 9h30v20H1z" fill="#f8e39a" stroke="#c9a54c"/><path d="M6 31V20h20v11h-4v-6H10v6z" fill="#7ec4e8" stroke="#4a8fb8"/></svg></button>
  <button class="tk run" aria-label="SAS"><svg width="31" height="31" viewBox="0 0 31 31"><path d="M4 .5h26.500v26l-4 4H.5V4z" fill="#2d62c0" stroke="#1c3f88"/><path d="M2 4l3-3h24v15H2z" fill="#a8c2ec"/><text x="15" y="15" font-size="14" font-weight="700" text-anchor="middle" font-family="Liberation Sans">sas</text><circle cx="10" cy="22" r="3.500" fill="#dce9fb"/></svg></button>
  <button class="tk" aria-label="Word"><svg width="32" height="32" viewBox="0 0 32 32"><path d="M4 .5h26v24l-4 5H1V4z" fill="#eaf2fc" stroke="#3467ae"/><path d="M3 6h5l2 12 3-11h4l2 11 2-12h5l-5 18h-5l-2-8-3 8H7z" fill="#1f55ad"/><path d="M20 19l11 3-3 9-9-1z" fill="#fff" stroke="#8ba8d4"/><path d="M22 23l6 2M21 26l6 1" stroke="#8ba8d4"/></svg></button>
  <button class="tk act" aria-label="Excel"><svg width="32" height="32" viewBox="0 0 32 32"><path d="M4 .5h26v24l-4 5H1V4z" fill="#e8f6e6" stroke="#3a8c40"/><path d="M5 5h6l4 6 5-7h6l-8 11 6 10h-6l-4-6-5 7H3l8-11z" fill="#3c9436"/><path d="M18 17l13 4-3 10-10-1z" fill="#fff" stroke="#8cc08a"/><path d="M20 22l8 2M19 25l8 2M23 19l-2 11" stroke="#8cc08a"/></svg></button>
  <span class="tk run stackedge"></span>
  <button class="tk" aria-label="Calculator"><svg width="24" height="31" viewBox="0 0 24 31"><rect x=".5" y=".5" width="23" height="30" rx="2" fill="#d6e6f5" stroke="#6d92b8"/><path d="M2.500 4h19v9h-19z" fill="#fff" stroke="#8aa6c4"/><path d="M1 2h22" stroke="#eaa23c" stroke-width="2"/><text x="14" y="12" font-size="9" fill="#334">0</text><path d="M3 17h18M3 20.500h18M3 24h18M3 27.500h18" stroke="#6588ad" stroke-width="2.500" stroke-dasharray="3 1"/><path d="M19 23h2v6h-2z" fill="#eaa23c"/></svg></button>
  <div class="ms-auto d-flex align-items-center gap-2">
    <button class="me-1" aria-label="Show hidden icons"><svg width="8" height="5"><path d="M0 5h8L4 0z"/></svg></button>
    <svg width="16" height="16" viewBox="0 0 16 16"><path d="M2 0v16" stroke="#234" stroke-width="2"/><path d="M3 1.500h4l3 1.500h4v7h-4l-3-1.500H3z" fill="#fff" stroke="#234"/><use href="#redx" x="6" y="6" width="10" height="10"/></svg>
    <svg width="16" height="16" viewBox="0 0 16 16"><path d="M5 3.500h10v8H5zM8 12v2.500h4V12M6 14.500h8" fill="#e8f5fb" stroke="#234"/><path d="M1.500 1h3v4h-3zM3 5v9h3" fill="#fff" stroke="#234"/></svg>
    <svg width="16" height="16" viewBox="0 0 16 16"><path d="M.5 5.500h3l5-5v15l-5-5h-3z" fill="#fff" stroke="#234"/><use href="#redx" x="6" y="6" width="10" height="10"/></svg>
    <div class="clock me-2">11:40 AM<br>4/15/2021</div>
  </div>
</footer>

<script>
const cols = document.getElementById('cols'), heads = document.getElementById('heads'), rows = document.getElementById('rows');
const names = [...'DEFGHIJKLMNOPQRSTUVWXYZ', 'AA', 'AB', 'AC'];
for (const n of names) {
  const c = document.createElement('col'); c.style.width = '64px'; cols.append(c);
  const h = document.createElement('th'); h.textContent = n; heads.append(h);
}
for (let r = 11; r <= 51; r++) rows.insertAdjacentHTML('beforeend', `<tr class="h20"><th>${r}</th></tr>`);

const sheets = ['INDEX', 'VERSION HISTORY', 'GENERAL SPECS', 'FILE TRANSFER SPECS', 'DATASET VARIABLE ATTRIBUTES', 'CODELISTS', 'VISIT, TPT CODELISTS', 'EGTEST CODELIST', 'RESULTS CODELIST', 'CONTACTS'];
const slash = first => `<svg width="${first ? 19 : 25}" height="15"><path d="${first ? 'M0 0h18L8 15H0z' : 'M0 0'}" fill="#fff"/><path d="M4 14.500h4L18 0" fill="none" stroke="#8d939b"/><path d="M9 14.500L19 .5" stroke="#fff"/></svg>`;
document.getElementById('stabs').innerHTML = sheets.map((s, i) => `<button class="stab${i ? '' : ' cur'}">${s}</button>${slash(i === 0)}`).join('')
  + `<button class="stab" aria-label="Insert worksheet"><svg width="16" height="14" viewBox="0 0 16 14"><path d="M4.500 3.500h10v7l-3 3h-7z" fill="#dce8fa" stroke="#5d7297"/><path d="M3.500 0v7M0 3.500h7M1 1l5 5M6 1L1 6" stroke="#e0901c"/></svg></button>${slash(false)}`;
</script>
<script src="https://cdn.jsdelivr.net/npm/bootstrap@5.3.0/dist/js/bootstrap.bundle.min.js"></script>
</body>
</html>
